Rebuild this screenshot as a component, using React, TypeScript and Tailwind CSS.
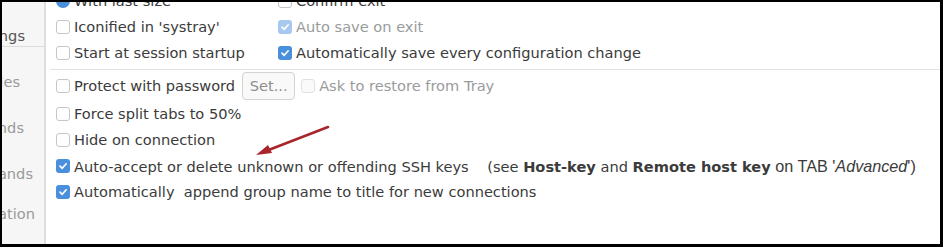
import React from "react";

function Check({ checked = false, disabled = false }: { checked?: boolean; disabled?: boolean }) {
  if (checked) {
    return (
      <span
        className={`flex h-[14px] w-[14px] shrink-0 items-center justify-center rounded-[3px] ${disabled ? "bg-[#a9c8ef]" : "bg-[#4a8fdc]"}`}
      >
        <svg width="10" height="10" viewBox="0 0 10 10">
          <path d="M2 5.2 L4.2 7.3 L8.2 2.8" fill="none" stroke="white" strokeWidth="1.7" strokeLinecap="round" strokeLinejoin="round" />
        </svg>
      </span>
    );
  }
  return (
    <span
      className={`h-[14px] w-[14px] shrink-0 rounded-[3px] border ${disabled ? "border-[#e1e1e1] bg-[#fafafa]" : "border-[#c6c6c6] bg-white"}`}
    />
  );
}

function Row({
  label,
  checked,
  disabled,
}: {
  label: React.ReactNode;
  checked?: boolean;
  disabled?: boolean;
}) {
  return (
    <div className="flex h-[26px] items-center gap-[4px] whitespace-pre">
      <Check checked={checked} disabled={disabled} />
      <span className={disabled ? "text-[#999b9c]" : "text-[#3b3b3b]"}>{label}</span>
    </div>
  );
}

const sideItems = [
  { label: "Profiles", h: "h-[46px]", pr: "pr-[24px]" },
  { label: "Backends", h: "h-[46px]", pr: "pr-[20px]" },
  { label: "Commands", h: "h-[46px]", pr: "pr-[11px]" },
  { label: "Integration", h: "h-[34px]", pr: "pr-[9px]" },
];

export default function App() {
  return (
    <div
      className="relative flex h-[247px] w-[943px] overflow-hidden border-t-2 border-r-[3px] border-b-[3px] border-l-2 border-black bg-white text-[14.6px]"
      style={{ fontFamily: '"DejaVu Sans", sans-serif' }}
    >
      {/* left stack sidebar, scrolled so only the ends of the labels show */}
      <div className="flex w-[44px] shrink-0 flex-col overflow-hidden border-r-2 border-[#dedede] bg-[#f6f6f6]">
        <div className="h-[23px] shrink-0" />
        <div className="flex h-[22px] shrink-0 items-center justify-end overflow-hidden whitespace-nowrap border-b border-[#dcdcdc] pr-[19px] text-[#555]">
          Main Settings
        </div>
        <div className="h-[12px] shrink-0" />
        {sideItems.map((it) => (
          <div
            key={it.label}
            className={`flex ${it.h} shrink-0 items-center justify-end overflow-hidden whitespace-nowrap ${it.pr} text-[#9a9a9a]`}
          >
            {it.label}
          </div>
        ))}
      </div>

      <div className="flex-1 pl-[4px]">
        <div className="-mt-[14px] pl-[6px]">
          <div className="grid grid-cols-[222px_1fr]">
            <div className="flex h-[26px] items-center gap-[4px]">
              <span className="h-[14px] w-[14px] rounded-full bg-[#4a8fdc]" />
              <span className="text-[#3b3b3b]">With last size</span>
            </div>
            <Row label="Confirm exit" />
            <Row label="Iconified in 'systray'" />
            <Row label="Auto save on exit" checked disabled />
            <Row label="Start at session startup" />
            <Row label="Automatically save every configuration change" checked />
          </div>
        </div>

        <div className="mt-[3px] h-px bg-[#e2e2e2]" />

        <div className="pl-[6px]">
          <div className="mt-[2px] flex h-[28px] items-center gap-[4px]">
            <Check />
            <span className="text-[#3b3b3b]">Protect with password</span>
            <button className="ml-[3px] h-[28px] w-[53px] rounded-[4px] border border-[#d3d3d3] bg-[#f9f9f9] text-[#8e8e8e]">
              Set...
            </button>
            <span className="ml-[2px] flex items-center gap-[4px]">
              <Check disabled />
              <span className="text-[#999b9c]">Ask to restore from Tray</span>
            </span>
          </div>
          <div className="h-px" />
          <Row label="Force split tabs to 50%" />
          <Row label="Hide on connection" />
          <Row
            checked
            label={
              <>
                {"Auto-accept or delete unknown or offending SSH keys    (see "}
                <b className="font-bold">Host-key</b>
                {" and "}
                <b className="font-bold">Remote host key</b>
                <span className="text-[16.2px]" style={{ fontFamily: '"Liberation Sans", Arial, sans-serif' }}>
                  {" on TAB '"}
                  <i>Advanced</i>
                  {"')"}
                </span>
              </>
            }
          />
          <Row checked label="Automatically  append group name to title for new connections" />
        </div>
      </div>

      <svg className="pointer-events-none absolute left-[-2px] top-[-2px]" width="943" height="247" viewBox="0 0 943 247">
        <line x1="328" y1="127" x2="266" y2="151" stroke="#a8262b" strokeWidth="2.6" strokeLinecap="round" />
        <polygon points="256,155 268,145 272,153" fill="#a8262b" />
      </svg>
    </div>
  );
}
